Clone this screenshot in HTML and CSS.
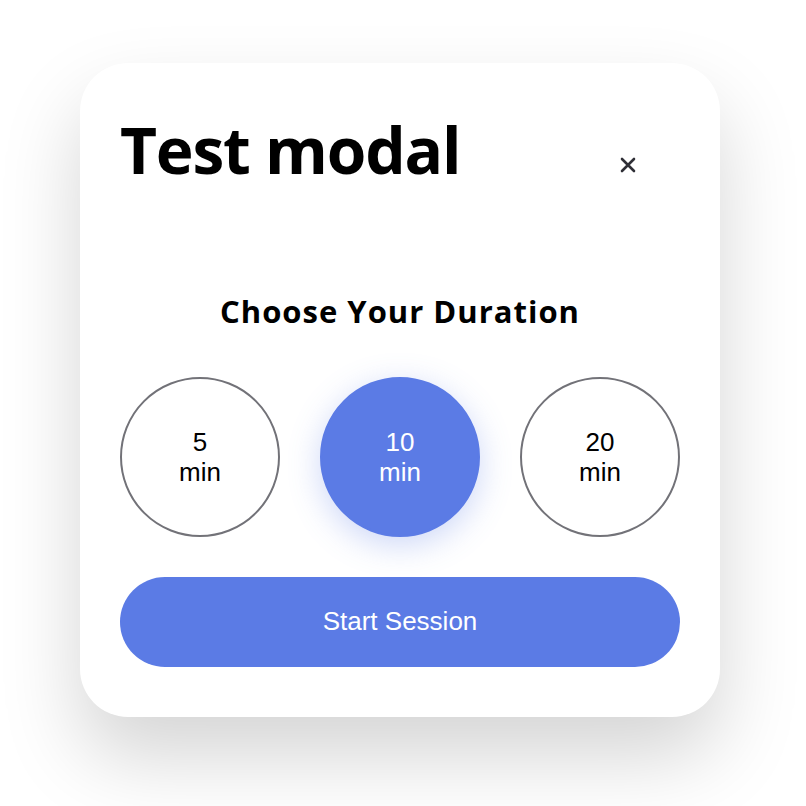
FILE: index.html
```html
<!DOCTYPE html>
<html lang="en">
<head>
    <meta charset="UTF-8">
    <meta name="viewport" content="width=device-width, initial-scale=1.0">
    <title>Test modal</title>
    <link rel="stylesheet" href="styles.css">
</head>
<body>

    <div class="modal">
        <div class="modal-header">
            <h1>Test modal</h1>
            <button class="close-button" aria-label="Close">
                <svg width="16" height="16" viewBox="0 0 16 16">
                    <path d="M2 2 L14 14 M14 2 L2 14" stroke="#2f2f36" stroke-width="2.6" stroke-linecap="round" fill="none"/>
                </svg>
            </button>
        </div>

        <h2 class="duration-title">Choose Your Duration</h2>

        <div class="duration-options">
            <button class="duration"><span>5</span><span>min</span></button>
            <button class="duration selected"><span>10</span><span>min</span></button>
            <button class="duration"><span>20</span><span>min</span></button>
        </div>

        <button class="start-button">Start Session</button>
    </div>

</body>
</html>
```

FILE: styles.css
```css
/* Base styles */
* {
    margin: 0;
    padding: 0;
    box-sizing: border-box;
}

:root {
    --primary-color: #5b7be5;
    --border-gray: #727278;
}

html, body {
    min-height: 100vh;
}

body {
    background-color: #ffffff;
    padding: 63px 0 0 80px;
    font-family: 'Liberation Sans', Arial, sans-serif;
}

.modal {
    width: 640px;
    padding: 40px 40px 50px;
    background-color: #fff;
    border-radius: 48px;
    box-shadow: 0 40px 80px rgba(0, 0, 0, 0.17);
}

.modal-header {
    display: flex;
    justify-content: space-between;
    align-items: center;
    margin-top: 9px;
}

h1 {
    font-family: 'Open Sans', sans-serif;
    font-weight: 700;
    font-size: 64px;
    letter-spacing: -1.2px;
    line-height: 1.2;
    color: #000;
}

.close-button {
    width: 24px;
    height: 24px;
    margin: 30px 40px 0 0;
    border: none;
    background: none;
    display: flex;
    justify-content: center;
    align-items: center;
    cursor: pointer;
}

.duration-title {
    margin-top: 104px;
    font-family: 'Open Sans', sans-serif;
    font-weight: 700;
    font-size: 31px;
    letter-spacing: 1px;
    line-height: 36px;
    text-align: center;
    color: #000;
}

.duration-options {
    display: flex;
    justify-content: space-between;
    margin-top: 48px;
}

.duration {
    width: 160px;
    height: 160px;
    border-radius: 50%;
    border: 2px solid var(--border-gray);
    background-color: #fff;
    color: #000;
    font-family: 'Liberation Sans', Arial, sans-serif;
    font-size: 26px;
    line-height: 30px;
    display: flex;
    flex-direction: column;
    justify-content: center;
    align-items: center;
    cursor: pointer;
}

.duration.selected {
    background-color: var(--primary-color);
    border-color: var(--primary-color);
    color: #fff;
    box-shadow: 0 8px 32px rgba(91, 123, 229, 0.3);
}

.start-button {
    display: block;
    width: 100%;
    height: 90px;
    margin-top: 40px;
    border: none;
    border-radius: 45px;
    background-color: var(--primary-color);
    color: #fff;
    font-family: 'Liberation Sans', Arial, sans-serif;
    font-size: 26px;
    cursor: pointer;
}
```
